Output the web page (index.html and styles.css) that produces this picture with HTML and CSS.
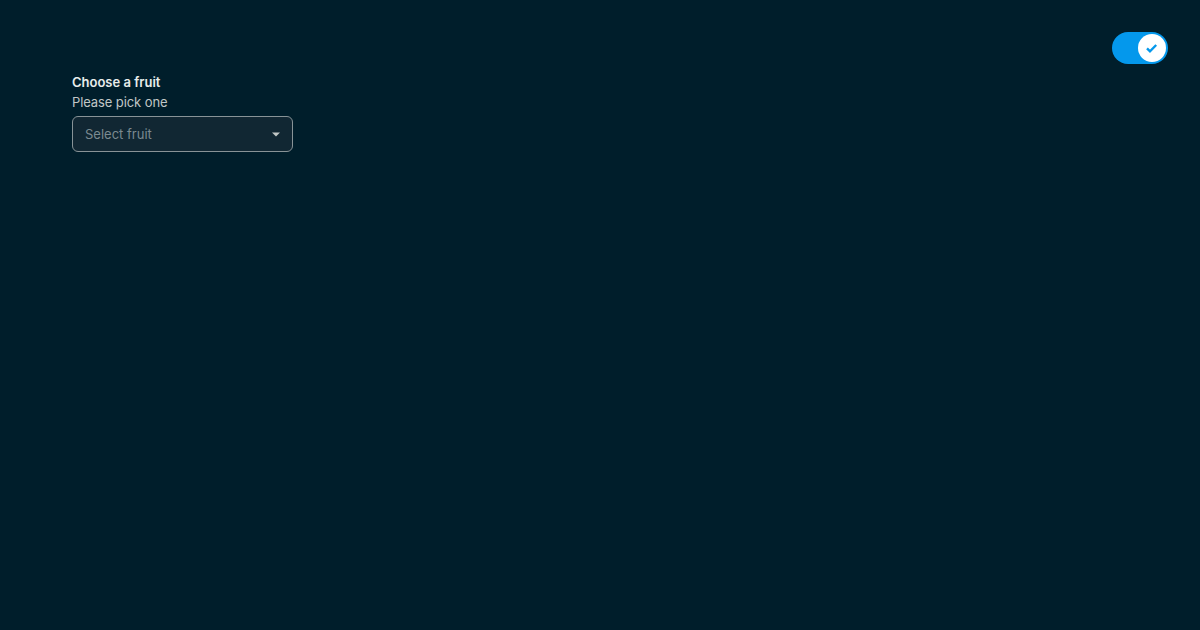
FILE: index.html
```html
<!DOCTYPE html>
<html lang="en">
<head>
<meta charset="utf-8">
<title>Choose a fruit</title>
<link rel="stylesheet" href="styles.css">
</head>
<body>
<div class="page">
  <div class="topbar">
    <button class="toggle" aria-checked="true" role="switch" aria-label="Dark mode">
      <span class="knob">
        <svg width="16" height="16" viewBox="0 0 16 16" aria-hidden="true"><path d="M3 8.3 6 11.3 12.2 5" fill="none" stroke="#0498EC" stroke-width="2.4"/></svg>
      </span>
    </button>
  </div>
  <div class="field">
    <label class="label">Choose a fruit</label>
    <p class="desc">Please pick one</p>
    <button class="select">
      <span class="placeholder">Select fruit</span>
      <svg class="caret" width="16" height="16" viewBox="0 0 16 16" aria-hidden="true"><path d="M4 6.5h8L8 10.5z" fill="#C1C7C6"/></svg>
    </button>
  </div>
</div>
</body>
</html>
```
FILE: styles.css
```css
* { box-sizing: border-box; }
html, body { margin: 0; padding: 0; }
body {
  background: #001E2B;
  width: 1200px;
  height: 630px;
  overflow: hidden;
  font-family: Inter, "Noto Sans", sans-serif;
}
.page {
  padding: 32px 32px 0 72px;
}
.topbar {
  display: flex;
  justify-content: flex-end;
  height: 32px;
  margin-bottom: 8px;
}
.toggle {
  width: 56px;
  height: 32px;
  border: none;
  border-radius: 16px;
  background: #0498EC;
  padding: 0 2px;
  display: flex;
  align-items: center;
  justify-content: flex-end;
  cursor: pointer;
}
.knob {
  width: 28px;
  height: 28px;
  border-radius: 50%;
  background: #FFFFFF;
  display: flex;
  align-items: center;
  justify-content: center;
}
.field {
  display: flex;
  flex-direction: column;
  width: 221px;
}
.label {
  font-size: 13px;
  line-height: 20px;
  font-weight: 600;
  color: #E8EDEB;
}
.desc {
  margin: 0 0 4px;
  font-size: 13px;
  line-height: 20px;
  letter-spacing: -0.1px;
  color: #C1C7C6;
}
.select {
  height: 36px;
  width: 221px;
  background: #112733;
  border: 1px solid #889397;
  border-radius: 6px;
  padding: 0 8px 0 12px;
  display: flex;
  align-items: center;
  justify-content: space-between;
  font-family: inherit;
  cursor: pointer;
}
.placeholder {
  font-size: 13px;
  color: #7B8A90;
}
.caret { display: block; }
```
